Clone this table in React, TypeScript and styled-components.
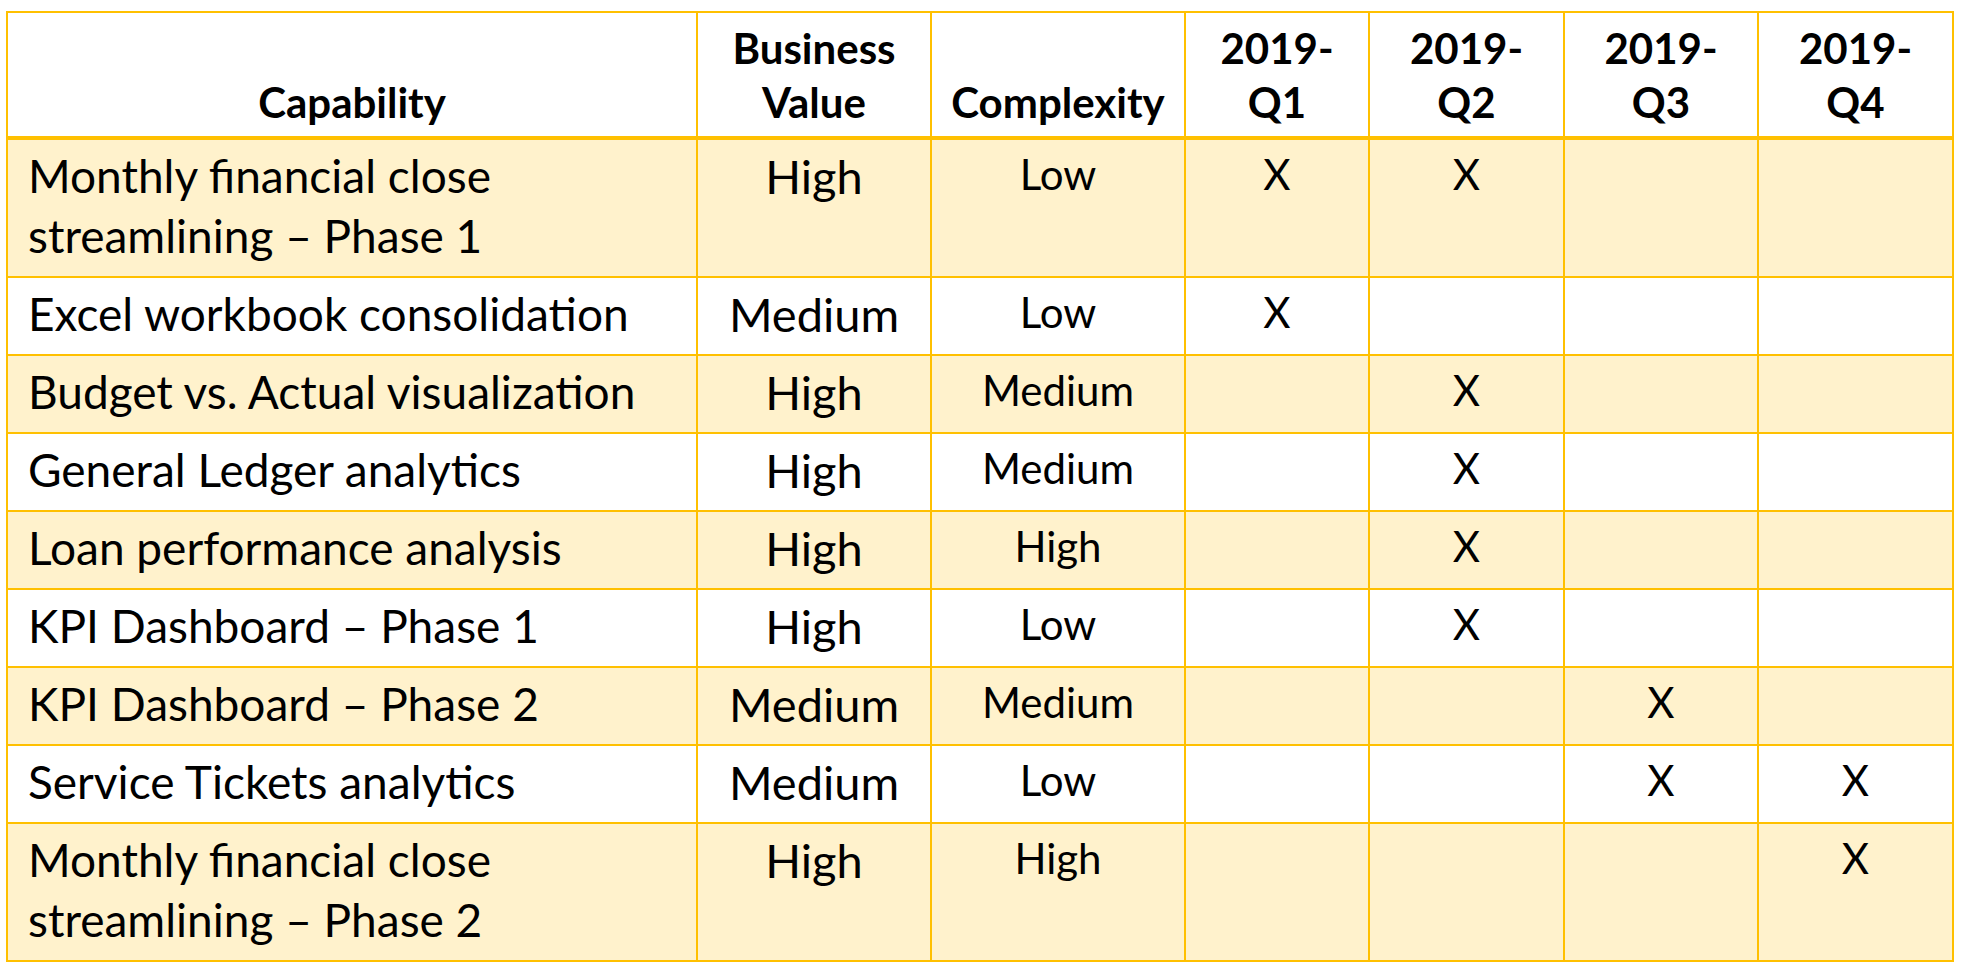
import styled, { createGlobalStyle } from "styled-components";

type Mark = "" | "X";

interface Capability {
  id: number;
  name: string;
  value: string;
  complexity: string;
  quarters: Mark[];
}

const capabilities: Capability[] = [
  { id: 1, name: "Monthly financial close streamlining – Phase 1", value: "High", complexity: "Low", quarters: ["X", "X", "", ""] },
  { id: 2, name: "Excel workbook consolidation", value: "Medium", complexity: "Low", quarters: ["X", "", "", ""] },
  { id: 3, name: "Budget vs. Actual visualization", value: "High", complexity: "Medium", quarters: ["", "X", "", ""] },
  { id: 4, name: "General Ledger analytics", value: "High", complexity: "Medium", quarters: ["", "X", "", ""] },
  { id: 5, name: "Loan performance analysis", value: "High", complexity: "High", quarters: ["", "X", "", ""] },
  { id: 6, name: "KPI Dashboard – Phase 1", value: "High", complexity: "Low", quarters: ["", "X", "", ""] },
  { id: 7, name: "KPI Dashboard – Phase 2", value: "Medium", complexity: "Medium", quarters: ["", "", "X", ""] },
  { id: 8, name: "Service Tickets analytics", value: "Medium", complexity: "Low", quarters: ["", "", "X", "X"] },
  { id: 9, name: "Monthly financial close streamlining – Phase 2", value: "High", complexity: "High", quarters: ["", "", "", "X"] }
];

const headers: string[][] = [
  ["Capability"],
  ["Business", "Value"],
  ["Complexity"],
  ["2019-", "Q1"],
  ["2019-", "Q2"],
  ["2019-", "Q3"],
  ["2019-", "Q4"]
];

const columnWidths = [690, 234, 254, 184, 195, 194, 195];

const App = () => {
  return (
    <>
      <GlobalStyle />
      <Roadmap>
        <colgroup>
          {columnWidths.map((w, i) => (
            <Column key={i} $width={w} />
          ))}
        </colgroup>
        <thead>
          <tr>
            {headers.map((lines, i) => (
              <HeadCell key={i}>
                {lines.map((line, j) => (
                  <span key={j}>
                    {j > 0 && <br />}
                    {line}
                  </span>
                ))}
              </HeadCell>
            ))}
          </tr>
        </thead>
        <tbody>
          {capabilities.map((cap, index) => (
            <Row key={cap.id} $shaded={index % 2 === 0}>
              <NameCell>{cap.name}</NameCell>
              <ValueCell>{cap.value}</ValueCell>
              <SmallCell>{cap.complexity}</SmallCell>
              {cap.quarters.map((q, i) => (
                <SmallCell key={i}>{q}</SmallCell>
              ))}
            </Row>
          ))}
        </tbody>
      </Roadmap>
    </>
  );
};

export default App;

const GlobalStyle = createGlobalStyle`
  body {
    margin: 0;
    background: #ffffff;
    font-family: Lato, "Open Sans", sans-serif;
    color: #000000;
  }
`;

const Roadmap = styled.table`
  border-collapse: collapse;
  table-layout: fixed;
  width: 1948px;
  margin: 11px 0 0 6px;
  border: 2px solid #ffc000;
`;

const Column = styled.col<{ $width: number }>`
  width: ${(p) => p.$width}px;
`;

const HeadCell = styled.th`
  border: 2px solid #ffc000;
  border-bottom: 4px solid #ffc000;
  background: #ffffff;
  font-family: Lato, sans-serif;
  font-weight: 700;
  font-size: 42px;
  line-height: 54px;
  text-align: center;
  vertical-align: bottom;
  padding: 8px 4px 7px 4px;
`;

const Row = styled.tr<{ $shaded: boolean }>`
  background: ${(p) => (p.$shaded ? "#fff2cc" : "#ffffff")};
`;

const BaseCell = styled.td`
  border: 2px solid #ffc000;
  vertical-align: top;
  font-family: Lato, sans-serif;
  font-weight: 400;
  color: #000000;
`;

const NameCell = styled(BaseCell)`
  font-size: 46px;
  line-height: 60px;
  text-align: left;
  padding: 6px 16px 10px 20px;
`;

const ValueCell = styled(BaseCell)`
  font-size: 47px;
  line-height: 60px;
  text-align: center;
  padding: 6px 4px 10px 4px;
`;

const SmallCell = styled(BaseCell)`
  font-size: 42px;
  line-height: 50px;
  text-align: center;
  padding: 9px 4px 7px 4px;
`;
